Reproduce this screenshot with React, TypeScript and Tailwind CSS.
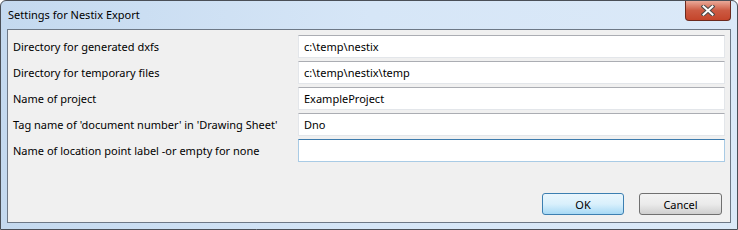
import React from "react";

const rows = [
  { label: "Directory for generated dxfs", value: "c:\\temp\\nestix" },
  { label: "Directory for temporary files", value: "c:\\temp\\nestix\\temp" },
  { label: "Name of project", value: "ExampleProject" },
  { label: "Tag name of 'document number' in 'Drawing Sheet'", value: "Dno" },
  { label: "Name of location point label -or empty for none", value: "", focused: true },
];

function CloseButton() {
  return (
    <div className="absolute right-[6px] top-0 w-[46px] h-[20px] rounded-b-[4px] border border-t-0 border-[#6b2a1e] bg-gradient-to-b from-[#e9a999] via-[#cc5a42] to-[#c4452b] flex items-center justify-center">
      <svg width="14" height="11" viewBox="0 0 14 11">
        <path d="M2.5 1.5 L11.5 9.5 M11.5 1.5 L2.5 9.5" stroke="#4a4a4a" strokeWidth="4" strokeLinecap="square" />
        <path d="M2.5 1.5 L11.5 9.5 M11.5 1.5 L2.5 9.5" stroke="#ffffff" strokeWidth="2" strokeLinecap="square" />
      </svg>
    </div>
  );
}

export default function App() {
  return (
    <div
      className="relative w-[738px] h-[230px] rounded-t-[6px] border border-[#4a4f57] bg-gradient-to-r from-[#c4d9ef] via-[#d6e6f7] to-[#dbe9f8] flex flex-col"
      style={{ fontFamily: '"Noto Sans", "Open Sans", sans-serif' }}
    >
      <CloseButton />
      {/* title bar */}
      <div className="h-[28px] shrink-0 pl-[7px] flex items-center text-[11px] text-black">
        Settings for Nestix Export
      </div>
      {/* client area */}
      <div className="mx-[6px] mb-[6px] flex-1 border border-[#6d7886] bg-[#f0f0f0] flex flex-col text-[11px] text-black">
        <div className="flex flex-col gap-[3px] pt-[5px] pl-[5px] pr-[5px]">
          {rows.map((r) => (
            <div key={r.label} className="flex items-center h-[23px]">
              <div className="w-[285px] shrink-0 leading-none whitespace-nowrap">{r.label}</div>
              <div
                className={`flex-1 h-[23px] bg-white border flex items-center pl-[5px] leading-none ${
                  r.focused
                    ? "border-[#a9cbe5] border-t-[#3d7bad]"
                    : "border-[#e3e6ea] border-t-[#abadb3]"
                }`}
              >
                {r.value}
              </div>
            </div>
          ))}
        </div>
        <div className="flex-1" />
        <div className="flex justify-end gap-[15px] pr-[8px] pb-[7px]">
          <button className="w-[82px] h-[22px] rounded-[3px] border border-[#3c7fb1] bg-gradient-to-b from-[#eaf6fd] via-[#d9f0fc] to-[#a7d9f5] text-[11px] leading-none">
            OK
          </button>
          <button className="w-[83px] h-[22px] rounded-[3px] border border-[#707070] bg-gradient-to-b from-[#f2f2f2] via-[#ebebeb] to-[#cfcfcf] text-[11px] leading-none">
            Cancel
          </button>
        </div>
      </div>
    </div>
  );
}
